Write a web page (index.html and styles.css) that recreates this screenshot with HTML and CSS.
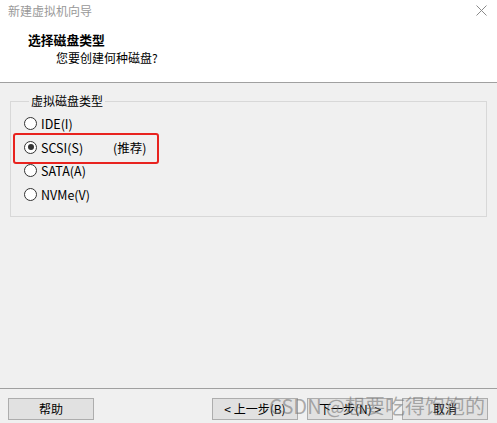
FILE: index.html
```html
<!DOCTYPE html>
<html>
<head>
<meta charset="utf-8">
<link rel="stylesheet" href="styles.css">
</head>
<body>
<div class="win">
  <div class="header">
    <div class="titlebar">
      <span class="wtitle">新建虚拟机向导</span>
      <svg class="close" width="11" height="11" viewBox="0 0 11 11"><path d="M0.5 0.5 L10.5 10.5 M10.5 0.5 L0.5 10.5" stroke="#8a8a8a" stroke-width="1" fill="none"/></svg>
    </div>
    <div class="htitle">选择磁盘类型</div>
    <div class="hsub">您要创建何种磁盘?</div>
  </div>
  <div class="main">
    <fieldset class="group">
      <legend>虚拟磁盘类型</legend>
      <div class="opt"><span class="radio"></span><span>IDE(I)</span></div>
      <div class="opt"><span class="radio on"></span><span>SCSI(S)</span><span class="rec">(推荐)</span></div>
      <div class="opt"><span class="radio"></span><span>SATA(A)</span></div>
      <div class="opt"><span class="radio"></span><span>NVMe(V)</span></div>
      <div class="mark"></div>
    </fieldset>
  </div>
  <div class="footer">
    <button class="btn">帮助</button>
    <div class="spacer"></div>
    <button class="btn">&lt; 上一步(B)</button>
    <button class="btn">下一步(N) &gt;</button>
    <button class="btn">取消</button>
    <div class="wm">CSDN @想要吃得饱饱的</div>
  </div>
</div>
</body>
</html>
```
FILE: styles.css
```css
html, body {
  margin: 0;
  padding: 0;
}
body {
  font-family: "Noto Sans CJK SC", "Microsoft YaHei", sans-serif;
  font-size: 12px;
  color: #000;
  background: #f0f0f0;
}
.win {
  width: 497px;
  height: 423px;
  display: flex;
  flex-direction: column;
  position: relative;
  overflow: hidden;
}
.header {
  background: #fff;
  height: 82px;
  border-bottom: 1px solid #a0a0a0;
  box-sizing: content-box;
}
.titlebar {
  display: flex;
  align-items: center;
  justify-content: space-between;
  height: 22px;
  padding: 0 10px 0 8px;
}
.wtitle {
  color: #999;
  font-size: 12px;
  line-height: 14px;
}
.close {
  display: block;
  margin-top: -2px;
}
.htitle {
  margin: 10px 0 0 28px;
  font-weight: bold;
  font-size: 12.8px;
  line-height: 16px;
}
.hsub {
  margin: 2px 0 0 56px;
  line-height: 16px;
}
.main {
  flex: 1;
  padding: 11px 10px 0 10px;
}
.group {
  position: relative;
  margin: 0;
  padding: 4px 0 0 13px;
  height: 123px;
  box-sizing: border-box;
  border: 1px solid #d8d8d8;
  min-width: 0;
}
.group legend {
  padding: 0 2px;
  margin-left: 5px;
  line-height: 14px;
}
.opt {
  display: flex;
  align-items: center;
  height: 23.6px;
  font-size: 12.5px;
}
.radio {
  width: 11px;
  height: 11px;
  border: 1px solid #333;
  border-radius: 50%;
  background: #fff;
  margin-right: 4px;
  position: relative;
  flex: none;
}
.radio.on::after {
  content: "";
  position: absolute;
  left: 2.5px;
  top: 2.5px;
  width: 6px;
  height: 6px;
  border-radius: 50%;
  background: #333;
}
.rec {
  margin-left: 30px;
}
.mark {
  position: absolute;
  left: 2px;
  top: 25px;
  width: 142px;
  height: 27px;
  border: 2px solid #e8231f;
  border-radius: 3px;
}
.footer {
  position: relative;
  border-top: 1px solid #a0a0a0;
  height: 35px;
  box-sizing: border-box;
  display: flex;
  align-items: flex-start;
  padding: 9px 9px 0 8px;
  gap: 9px;
}
.spacer {
  flex: 1;
}
.btn {
  width: 86px;
  height: 22px;
  border: 1px solid #adadad;
  background: #e1e1e1;
  font-family: "Noto Sans CJK SC", "Microsoft YaHei", sans-serif;
  font-size: 12px;
  color: #000;
  padding: 0;
  line-height: 18px;
}
.wm {
  position: absolute;
  right: 12px;
  top: 4px;
  font-size: 20px;
  line-height: 26px;
  color: rgba(110, 110, 110, 0.55);
  white-space: nowrap;
  pointer-events: none;
}
```
